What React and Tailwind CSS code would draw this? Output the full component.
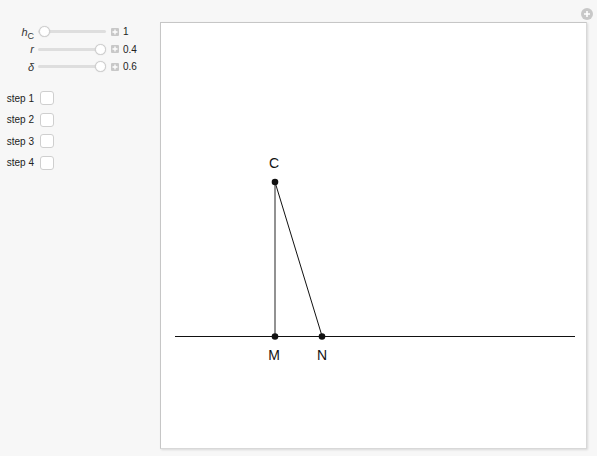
import React from 'react';

const sliders = [
  { label: <span className="italic">h<span className="not-italic text-[9px] relative top-[3px]">C</span></span>, pos: 0, value: '1' },
  { label: <span className="italic">r</span>, pos: 1, value: '0.4' },
  { label: <span className="italic">δ</span>, pos: 1, value: '0.6' },
];

const Slider = ({ label, pos, value }) => (
  <div className="flex items-center h-[17.5px]">
    <div className="w-[38px] pr-[4px] text-right text-[11px] text-[#333]">{label}</div>
    <div className="relative w-[68px] h-[11px] flex items-center">
      <div className="w-full h-[3px] rounded-full bg-[#dedede]" />
      <div
        className={`absolute top-0 w-[11px] h-[11px] rounded-full bg-white border border-[#cfcfcf] shadow-[0_0_1px_rgba(0,0,0,0.2)] ${pos === 0 ? 'left-[1px]' : 'right-[0px]'}`}
      />
    </div>
    <div className="ml-[5px] w-[8px] h-[8px] bg-[#c8c8c8] rounded-[1px] flex items-center justify-center">
      <svg width="6" height="6" viewBox="0 0 6 6"><path d="M3 0.5V5.5M0.5 3H5.5" stroke="white" strokeWidth="1.3" /></svg>
    </div>
    <div className="ml-[4px] text-[10px] text-[#222]">{value}</div>
  </div>
);

const Step = ({ n }) => (
  <div className="flex items-center h-[21.5px]">
    <div className="w-[35px] pr-[1px] text-right text-[10px] text-[#222]">step {n}</div>
    <div className="ml-[5px] w-[14px] h-[14px] rounded-[3px] border border-[#cfcfcf] bg-white" />
  </div>
);

export default function App() {
  return (
    <div className="w-[597px] h-[456px] bg-[#f7f7f7] flex relative" style={{ fontFamily: '"Liberation Sans", Arial, sans-serif' }}>
      <div className="absolute right-[4px] top-[8px] w-[12px] h-[12px] rounded-full bg-[#c8c8c8] flex items-center justify-center">
        <svg width="8" height="8" viewBox="0 0 8 8"><path d="M4 1V7M1 4H7" stroke="white" strokeWidth="1.6" /></svg>
      </div>
      <div className="w-[160px] pt-[23px] flex flex-col">
        {sliders.map((s, i) => (
          <Slider key={i} {...s} />
        ))}
        <div className="mt-[12px] flex flex-col">
          {[1, 2, 3, 4].map((n) => (
            <Step key={n} n={n} />
          ))}
        </div>
      </div>
      <div className="mt-[22px] w-[427px] h-[427px] bg-white border border-[#c6c6c6] border-r-[#d8d8d8] border-b-[#d8d8d8] shadow-[1px_1px_2px_rgba(0,0,0,0.12)]">
        <svg width="425" height="425" viewBox="0 0 425 425">
          <line x1="14" y1="313.5" x2="414" y2="313.5" stroke="#111" strokeWidth="1" />
          <line x1="114" y1="159" x2="114" y2="313" stroke="#777" strokeWidth="1.6" />
          <line x1="114" y1="159" x2="161" y2="313" stroke="#111" strokeWidth="1" />
          <circle cx="114" cy="159" r="3.3" fill="#111" />
          <circle cx="114" cy="313.5" r="3.3" fill="#111" />
          <circle cx="161" cy="313.5" r="3.3" fill="#111" />
          <text x="113" y="145" fontSize="14" textAnchor="middle" fill="#111" fontFamily="Liberation Sans, Arial, sans-serif">C</text>
          <text x="113" y="337" fontSize="14" textAnchor="middle" fill="#111" fontFamily="Liberation Sans, Arial, sans-serif">M</text>
          <text x="161" y="337" fontSize="14" textAnchor="middle" fill="#111" fontFamily="Liberation Sans, Arial, sans-serif">N</text>
        </svg>
      </div>
    </div>
  );
}
